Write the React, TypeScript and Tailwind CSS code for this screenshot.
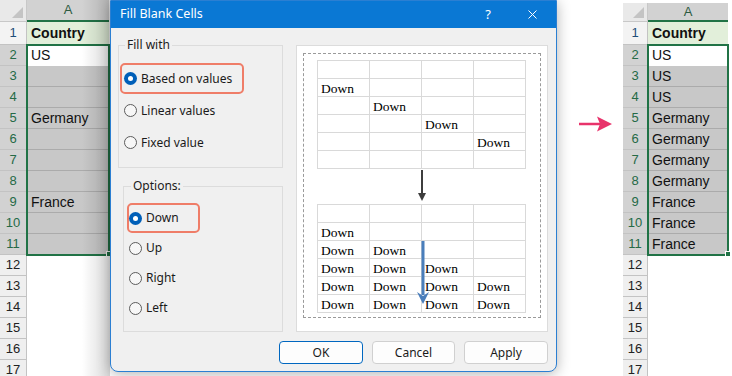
const BEFORE = ["Country", "US", "", "", "Germany", "", "", "", "France", "", ""];
const AFTER = [
  "Country",
  "US",
  "US",
  "US",
  "Germany",
  "Germany",
  "Germany",
  "Germany",
  "France",
  "France",
  "France",
];

const ROWS = Array.from({ length: 17 }, (_, i) => i + 1);

type SheetProps = {
  values: string[];
  headW: number;
  colW: number;
  topPad: number;
  width: number;
  shade?: boolean;
};

const Sheet = ({ values, headW, colW, topPad, width, shade }: SheetProps) => {
  return (
    <div
      className="relative flex shrink-0 flex-col overflow-hidden bg-white font-['Liberation_Sans',Arial,sans-serif]"
      style={{ width, paddingTop: topPad }}
    >
      <div className="flex shrink-0" style={{ height: 22 - topPad }}>
        <div
          className="relative shrink-0 border-r border-b border-[#c8c8c8] bg-[#e9e9e9]"
          style={{ width: headW }}
        >
          <svg className="absolute right-[3px] bottom-[3px]" width="11" height="11" viewBox="0 0 11 11">
            <path d="M11 0 L11 11 L0 11 Z" fill="#c4c4c4" />
          </svg>
        </div>
        <div
          className="flex shrink-0 items-center justify-center border-b-2 border-[#217346] bg-[#d2d2d2] text-[13px] text-[#2c5a40]"
          style={{ width: colW }}
        >
          A
        </div>
      </div>
      {ROWS.map((n) => {
        const v = values[n - 1] ?? "";
        const sel = n >= 2 && n <= 11;
        const cellBg =
          n === 1 ? "bg-[#e2efda]" : n === 2 ? "bg-white" : sel ? "bg-[#c8c8c8] border-b border-[#ababab]" : "bg-white";
        return (
          <div key={n} className={`flex shrink-0 ${n === 1 ? "h-[23px]" : "h-[21px]"}`}>
            <div
              className={`flex shrink-0 items-center justify-center border-r border-b border-[#c3c3c3] text-[13px] ${
                sel ? "bg-[#d2d2d2] text-[#256a46]" : n === 1 ? "bg-[#f3f3f3] text-[#1f4e79]" : "bg-[#efefef] text-[#222]"
              }`}
              style={{ width: headW }}
            >
              {n}
            </div>
            <div
              className={`flex shrink-0 items-center pl-[4px] text-[14px] text-[#111] ${cellBg} ${
                n === 1 ? "font-bold text-[13.5px]" : ""
              }`}
              style={{ width: colW }}
            >
              {v}
            </div>
          </div>
        );
      })}
      <div
        className="pointer-events-none absolute top-[44px] h-[212px] border-2 border-[#217346]"
        style={{ left: headW - 1, width: colW + 2 }}
      />
      <div
        className="pointer-events-none absolute top-[251px] h-[6px] w-[6px] border border-white bg-[#217346]"
        style={{ left: headW + colW - 3 }}
      />
      {shade && (
        <div className="pointer-events-none absolute top-0 right-0 h-full w-[28px] bg-gradient-to-r from-transparent to-black/15" />
      )}
    </div>
  );
};

const Radio = ({ on }: { on?: boolean }) =>
  on ? (
    <span className="flex h-[13px] w-[13px] shrink-0 items-center justify-center rounded-full bg-[#005fb8]">
      <span className="h-[5px] w-[5px] rounded-full bg-white" />
    </span>
  ) : (
    <span className="h-[13px] w-[13px] shrink-0 rounded-full border border-[#5c5c5c] bg-[#f7f7f7]" />
  );

const Option = ({
  label,
  on,
  boxW,
  h,
  ml,
  pl,
}: {
  label: string;
  on?: boolean;
  boxW: number;
  h: number;
  ml: number;
  pl: number;
}) => (
  <div
    className={`flex shrink-0 items-center gap-[4px] rounded-[5px] border-2 ${
      on ? "border-[#ef7d68]" : "border-transparent"
    }`}
    style={{ width: boxW, height: h, marginLeft: ml, paddingLeft: pl }}
  >
    <Radio on={on} />
    <span className="whitespace-nowrap leading-none">{label}</span>
  </div>
);

const Grid = ({ rows }: { rows: boolean[][] }) => (
  <div className="flex w-[209px] flex-col border-t border-l border-[#d9d9d9]">
    {rows.map((r, i) => (
      <div key={i} className="flex h-[18px]">
        {r.map((d, j) => (
          <div
            key={j}
            className="flex h-[18px] w-[52px] items-end border-r border-b border-[#d9d9d9] pb-[1px] pl-[3px] font-['Liberation_Serif',serif] text-[13.5px] leading-none text-black"
          >
            {d ? "Down" : ""}
          </div>
        ))}
      </div>
    ))}
  </div>
);

const TOP_ROWS = [
  [false, false, false, false],
  [true, false, false, false],
  [false, true, false, false],
  [false, false, true, false],
  [false, false, false, true],
  [false, false, false, false],
];

const BOTTOM_ROWS = [
  [false, false, false, false],
  [true, false, false, false],
  [true, true, false, false],
  [true, true, true, false],
  [true, true, true, true],
  [true, true, true, true],
];

const Dialog = () => (
  <div className="relative z-10 flex h-[372px] w-[447px] shrink-0 flex-col overflow-hidden rounded-b-[8px] border border-[#2b7fd2] bg-[#f0f0f0] font-['Noto_Sans',sans-serif] text-[12px] text-[#1a1a1a] shadow-[0_2px_14px_rgba(0,0,0,0.3)]">
    <div className="flex h-[27px] shrink-0 items-center bg-[#0a78d4] pl-[9px] text-white">
      <span className="text-[12.5px]">Fill Blank Cells</span>
      <span className="ml-auto text-[13px]">?</span>
      <svg className="mr-[19px] ml-[37px]" width="9" height="9" viewBox="0 0 9 9">
        <path d="M0.5 0.5 L8.5 8.5 M8.5 0.5 L0.5 8.5" stroke="white" strokeWidth="1" />
      </svg>
    </div>
    <div className="flex shrink-0 pt-[9px] pl-[7px]">
      <div className="flex w-[165px] shrink-0 flex-col">
        <fieldset className="h-[131px] border border-[#dcdcdc] pt-[10px]">
          <legend className="ml-[6px] px-[2px] leading-[16px]">Fill with</legend>
          <div className="flex flex-col gap-[1px]">
            <Option label="Based on values" on boxW={124} h={31} ml={1} pl={2} />
            <Option label="Linear values" boxW={124} h={31} ml={1} pl={2} />
            <Option label="Fixed value" boxW={124} h={31} ml={1} pl={2} />
          </div>
        </fieldset>
        <fieldset className="mt-[10px] ml-[5px] h-[154px] w-[160px] border border-[#dcdcdc] pt-[9px]">
          <legend className="ml-[7px] px-[2px] leading-[16px]">Options:</legend>
          <div className="flex flex-col">
            <Option label="Down" on boxW={73} h={30} ml={3} pl={0} />
            <Option label="Up" boxW={73} h={30} ml={3} pl={0} />
            <Option label="Right" boxW={73} h={30} ml={3} pl={0} />
            <Option label="Left" boxW={73} h={30} ml={3} pl={0} />
          </div>
        </fieldset>
      </div>
      <div className="mt-[8px] ml-[13px] h-[287px] w-[252px] shrink-0 border border-[#dcdcdc] bg-white pt-[7px] pl-[6px]">
        <div className="h-[265px] w-[238px] border border-dashed border-[#9a9a9a] pt-[6px] pl-[13px]">
          <Grid rows={TOP_ROWS} />
          <div className="flex h-[35px] w-[209px] justify-center pt-[1px]">
            <svg width="10" height="32" viewBox="0 0 10 32">
              <line x1="5" y1="0" x2="5" y2="27" stroke="#3d3d3d" strokeWidth="2" />
              <path d="M1 23 L5 31 L9 23 Z" fill="#3d3d3d" />
            </svg>
          </div>
          <div className="relative">
            <Grid rows={BOTTOM_ROWS} />
            <svg className="absolute top-[37px] left-[99px]" width="14" height="64" viewBox="0 0 14 64">
              <line x1="7" y1="0" x2="7" y2="54" stroke="#4a7ebb" strokeWidth="3" />
              <path d="M1 51 L7 63 L13 51 L7 55 Z" fill="#4a7ebb" />
            </svg>
          </div>
        </div>
      </div>
    </div>
    <div className="mt-[9px] flex justify-end gap-[9px] pr-[8px]">
      <button className="h-[23px] w-[84px] rounded-[4px] border border-[#0067c0] bg-[#fdfdfd]">OK</button>
      <button className="h-[23px] w-[83px] rounded-[4px] border border-[#d0d0d0] bg-[#fdfdfd]">Cancel</button>
      <button className="h-[23px] w-[84px] rounded-[4px] border border-[#d0d0d0] bg-[#fdfdfd]">Apply</button>
    </div>
  </div>
);

export default function App() {
  return (
    <div className="flex h-[376px] w-[732px] overflow-hidden bg-white">
      <Sheet values={BEFORE} headW={27} colW={82} topPad={0} width={110} shade />
      <Dialog />
      <div className="flex w-[66px] shrink-0 pt-[116px] pl-[22px]">
        <svg width="33" height="16" viewBox="0 0 33 16">
          <line x1="0" y1="8" x2="22" y2="8" stroke="#e8336b" strokeWidth="2.5" />
          <path d="M18 0.5 L33 8 L18 15.5 L21 8 Z" fill="#e8336b" />
        </svg>
      </div>
      <Sheet values={AFTER} headW={25} colW={80} topPad={3} width={109} />
    </div>
  );
}
